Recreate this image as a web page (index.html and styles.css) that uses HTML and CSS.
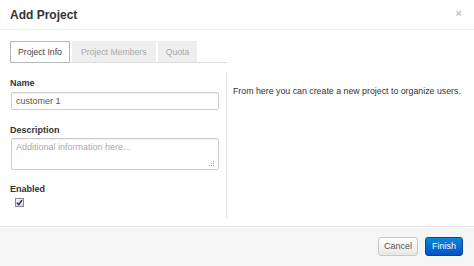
FILE: index.html
```html
<!DOCTYPE html>
<html>
<head>
<meta charset="utf-8">
<link rel="stylesheet" href="styles.css">
</head>
<body>
<div class="modal">
  <div class="modal-header">
    <h3 class="title">Add Project</h3>
    <span class="close">×</span>
  </div>
  <div class="modal-body">
    <div class="left">
      <ul class="tabs">
        <li class="tab active">Project Info</li>
        <li class="tab wide">Project Members</li>
        <li class="tab">Quota</li>
      </ul>
      <div class="pane">
        <div class="form">
          <label class="label">Name</label>
          <input class="field" type="text" value="customer 1">
          <label class="label">Description</label>
          <div class="ta-wrap">
            <textarea class="field area" placeholder="Additional information here..."></textarea>
            <svg class="grip" width="6" height="6" viewBox="0 0 6 6"><g fill="#999"><rect x="4" y="0" width="1" height="1"/><rect x="4" y="2" width="1" height="1"/><rect x="2" y="2" width="1" height="1"/><rect x="4" y="4" width="1" height="1"/><rect x="2" y="4" width="1" height="1"/><rect x="0" y="4" width="1" height="1"/></g></svg>
          </div>
          <label class="label">Enabled</label>
          <span class="check"><svg width="7" height="7" viewBox="0 0 7 7"><path d="M1 3.8 L2.8 5.6 L6 1" fill="none" stroke="#2a3550" stroke-width="1.5"/></svg></span>
        </div>
        <div class="help">From here you can create a new project to organize users.</div>
      </div>
    </div>
  </div>
  <div class="modal-footer">
    <button class="btn">Cancel</button>
    <button class="btn primary">Finish</button>
  </div>
</div>
</body>
</html>
```

FILE: styles.css
```css
* { box-sizing: border-box; }
html, body { margin: 0; padding: 0; background: #fff; }
body { width: 474px; height: 266px; overflow: hidden; font-family: "Liberation Sans", Arial, sans-serif; color: #333; }
.modal { display: flex; flex-direction: column; height: 266px; }
.modal-header { height: 30px; border-bottom: 1px solid #eee; display: flex; align-items: center; justify-content: space-between; padding: 0 12px 0 10px; }
.title { margin: 0; font-size: 12px; font-weight: bold; color: #333; line-height: 14px; padding-top: 1px; }
.close { font-size: 11px; font-weight: bold; color: #c4c4c4; line-height: 10px; padding-bottom: 4px; }
.modal-body { flex: 1; padding: 11px 0 0 10px; }
.left { width: 217px; }
.tabs { list-style: none; margin: 0; padding: 0; display: flex; gap: 2px; border-bottom: 1px solid #ddd; height: 22px; }
.tab { font-size: 8.7px; color: #aaa; background: #eee; padding: 0 7px; height: 21px; line-height: 21px; border: 1px solid #eee; border-bottom: none; }
.tab.wide { padding: 0 8px; }
.tab.active { background: #fff; color: #444; border: 1px solid #b8b8b8; height: 22px; margin-bottom: -1px; }
.pane { display: flex; width: 464px; }
.form { width: 217px; border-right: 1px solid #e5e5e5; margin-top: 10px; padding-bottom: 11px; display: flex; flex-direction: column; }
.label { font-size: 9px; font-weight: bold; color: #333; line-height: 11px; margin-top: 5px; margin-bottom: 3px; }
.field { display: block; width: 208px; margin-left: 1px; height: 18px; border: 1px solid #ccc; border-radius: 2px; font-family: "Liberation Sans", Arial, sans-serif; font-size: 9px; color: #555; padding: 0 4px; margin-bottom: 10px; box-shadow: inset 0 1px 1px rgba(0,0,0,0.06); outline: none; }
.ta-wrap { position: relative; width: 209px; margin-top: -1px; }
.area { height: 32px; resize: none; padding: 3px 4px; line-height: 11px; margin-bottom: 9px; }
.area::placeholder { color: #aaa; }
.grip { position: absolute; right: 4px; top: 23px; }
.check { width: 9px; height: 9px; margin-left: 5px; margin-top: 0; border: 1px solid #8a8a8a; background: linear-gradient(#f4f6fa, #d6dce6); display: flex; align-items: center; justify-content: center; }
.check svg { display: block; }
.help { font-size: 8.8px; color: #333; padding: 23px 0 0 6px; line-height: 11px; }
.modal-footer { height: 40px; border-top: 1px solid #e8e8e8; background: #f5f5f5; display: flex; justify-content: flex-end; align-items: center; gap: 7px; padding: 0 11px 0 0; box-shadow: inset 0 1px 0 #fff; }
.btn { height: 19px; font-family: "Liberation Sans", Arial, sans-serif; font-size: 9px; padding: 0 5px; border-radius: 3px; border: 1px solid #c8c8c8; background: linear-gradient(#fff, #e6e6e6); color: #555; line-height: 17px; }
.btn.primary { color: #fff; background: linear-gradient(#0a88d6, #0450c8); border-color: #0a3f9e; padding: 0 6px; }
```
